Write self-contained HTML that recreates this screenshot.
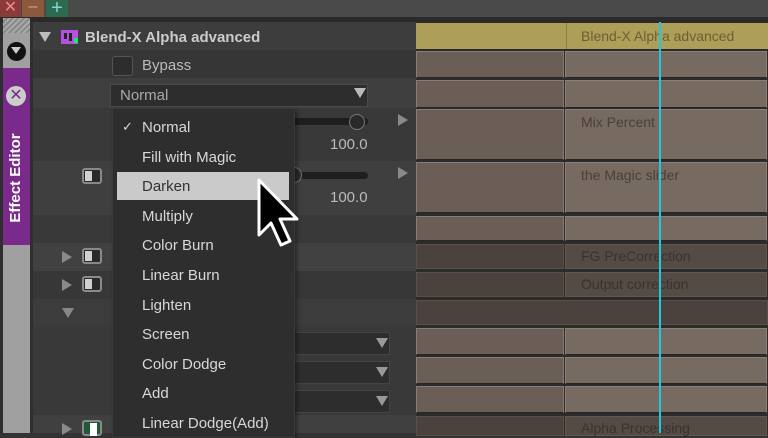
<!DOCTYPE html><html><head><style>
*{margin:0;padding:0;box-sizing:border-box}
body{width:768px;height:433px;overflow:hidden;background:#333;font-family:"Liberation Sans","DejaVu Sans",sans-serif;position:relative}
.a{position:absolute}
.t{color:#d0d0d0;font-size:15px;white-space:nowrap}
.tr{position:absolute;border:1px solid #8a7d75;border-bottom-color:#2a2522;background:#6b5e56}
.tr2{position:absolute;border:1px solid #8d8078;border-bottom-color:#2a2522;background:#776a61}
.dk{background:#4b423d!important;border-color:#5a504a!important}
.dk2{background:#554b45!important;border-color:#625751!important}
.lbl{position:absolute;color:#4a403a;font-size:15px;white-space:nowrap}
.mi{position:absolute;left:142px;color:#d8d8d8;font-size:15px}
.tog{position:absolute;width:20px;height:16px;border:2px solid #8a8a8a;border-radius:3px;background:#2a2a2a}
.tog::before{content:"";position:absolute;left:1px;top:1px;width:7px;height:10px;background:#d0d0d0}
.tri{position:absolute;width:0;height:0;border-top:6px solid transparent;border-bottom:6px solid transparent;border-left:10px solid #8a8a8a}
.dn{position:absolute;width:0;height:0;border-left:6px solid transparent;border-right:6px solid transparent;border-top:10px solid #999}
</style></head><body>
<!-- top bar -->
<div class="a" style="left:0;top:0;width:768px;height:17px;background:#4a4a4a"></div>
<div class="a" style="left:0;top:17px;width:768px;height:5px;background:#2a2a2a"></div>
<div class="a" style="left:0;top:0;width:21px;height:17px;background:#8a3a3a;color:#e88;font-size:16px;text-align:center;line-height:16px">✕</div>
<div class="a" style="left:22px;top:0;width:22px;height:17px;background:#8a5a3a;color:#e9a;font-size:16px;text-align:center;line-height:14px">–</div>
<div class="a" style="left:46px;top:0;width:22px;height:17px;background:#2e6a50;color:#7dc;font-size:20px;text-align:center;line-height:16px">+</div>
<!-- left strip -->
<div class="a" style="left:0;top:22px;width:33px;height:411px;background:#2f2f2f"></div>
<div class="a" style="left:3px;top:18px;width:27px;height:15px;background:repeating-linear-gradient(135deg,#aaa 0 2px,#888 2px 4px)"></div>
<div class="a" style="left:3px;top:33px;width:27px;height:35px;background:#a0a0a0"></div>
<div class="a" style="left:7px;top:42px;width:19px;height:19px;border-radius:50%;background:#111"></div>
<div class="a" style="left:11px;top:47px;width:0;height:0;border-left:5px solid transparent;border-right:5px solid transparent;border-top:7px solid #ccc"></div>
<div class="a" style="left:3px;top:68px;width:27px;height:177px;background:#7a2a8a"></div>
<div class="a" style="left:6px;top:86px;width:20px;height:20px;border-radius:50%;background:#ccc;color:#7a2a8a;font-size:16px;font-weight:bold;text-align:center;line-height:20px">✕</div>
<div class="a" style="left:-35px;top:168px;width:102px;height:20px;transform:rotate(-90deg);color:#fff;font-weight:bold;font-size:15px;text-align:center;line-height:20px">Effect Editor</div>
<div class="a" style="left:3px;top:245px;width:27px;height:188px;background:#a0a0a0"></div>
<!-- main panel -->
<div class="a" style="left:33px;top:22px;width:383px;height:411px;background:#3b3b3b"></div>
<div class="a" style="left:33px;top:22px;width:383px;height:28px;background:#3d3d3d"></div>
<div class="a" style="left:33px;top:50px;width:383px;height:28px;background:#363636"></div>
<div class="a" style="left:33px;top:78px;width:383px;height:30px;background:#3f3f3f"></div>
<div class="a" style="left:33px;top:108px;width:383px;height:53px;background:#393939"></div>
<div class="a" style="left:33px;top:161px;width:383px;height:54px;background:#3f3f3f"></div>
<div class="a" style="left:33px;top:215px;width:383px;height:28px;background:#393939"></div>
<div class="a" style="left:33px;top:243px;width:383px;height:28px;background:#414141"></div>
<div class="a" style="left:33px;top:271px;width:383px;height:28px;background:#373737"></div>
<div class="a" style="left:33px;top:299px;width:383px;height:28px;background:#3c3c3c"></div>
<div class="a" style="left:33px;top:327px;width:383px;height:88px;background:#393939"></div>
<div class="a" style="left:33px;top:415px;width:383px;height:18px;background:#404040"></div>
<div class="a" style="left:39px;top:32px;width:0;height:0;border-left:6px solid transparent;border-right:6px solid transparent;border-top:10px solid #bbb"></div>
<div class="a" style="left:61px;top:30px;width:17px;height:14px;background:#b550e0"></div>
<div class="a" style="left:64px;top:33px;width:3px;height:6px;background:#222"></div>
<div class="a" style="left:69px;top:33px;width:3px;height:8px;background:#222"></div>
<div class="a" style="left:74px;top:38px;width:4px;height:5px;background:#1e6"></div>
<div class="a t" style="left:85px;top:29px;font-weight:bold;color:#ccc">Blend-X Alpha advanced</div>
<div class="a" style="left:112px;top:56px;width:21px;height:20px;border:1px solid #555;border-radius:3px;background:#2d2d2d"></div>
<div class="a t" style="left:142px;top:57px;color:#bbb">Bypass</div>
<div class="a" style="left:110px;top:84px;width:258px;height:23px;background:#2d2d2d;border:1px solid #4a4a4a"></div>
<div class="a t" style="left:120px;top:87px;color:#aaa">Normal</div>
<div class="dn" style="left:354px;top:88px;border-top-color:#bbb"></div>
<!-- sliders -->
<div class="a" style="left:290px;top:118px;width:78px;height:7px;border-radius:4px;background:#1e1e1e"></div>
<div class="a" style="left:349px;top:114px;width:16px;height:16px;border-radius:50%;background:#2a2a2a;border:1px solid #777"></div>
<div class="a t" style="left:330px;top:136px;color:#bbb">100.0</div>
<div class="tri" style="left:398px;top:114px"></div>
<div class="tog" style="left:82px;top:168px"></div>
<div class="a" style="left:290px;top:172px;width:78px;height:7px;border-radius:4px;background:#1e1e1e"></div>
<div class="a" style="left:286px;top:167px;width:16px;height:16px;border-radius:50%;background:#2a2a2a;border:1px solid #777"></div>
<div class="a t" style="left:330px;top:189px;color:#bbb">100.0</div>
<div class="tri" style="left:398px;top:167px"></div>
<div class="tri" style="left:62px;top:251px"></div><div class="tog" style="left:82px;top:248px"></div>
<div class="tri" style="left:62px;top:279px"></div><div class="tog" style="left:82px;top:276px"></div>
<div class="dn" style="left:62px;top:308px;border-top-color:#888"></div>
<div class="a" style="left:290px;top:332px;width:100px;height:23px;background:#2d2d2d;border:1px solid #444"></div>
<div class="a" style="left:290px;top:361px;width:100px;height:23px;background:#2d2d2d;border:1px solid #444"></div>
<div class="a" style="left:290px;top:390px;width:100px;height:23px;background:#2d2d2d;border:1px solid #444"></div>
<div class="dn" style="left:376px;top:338px"></div><div class="dn" style="left:376px;top:367px"></div><div class="dn" style="left:376px;top:396px"></div>
<div class="tri" style="left:62px;top:423px"></div>
<div class="a" style="left:82px;top:420px;width:20px;height:16px;border:2px solid #8a8a8a;border-radius:3px;background:#1e5a36"></div>
<div class="a" style="left:90px;top:423px;width:7px;height:13px;background:#fff"></div>
<!-- timeline -->
<div class="a" style="left:416px;top:22px;width:352px;height:411px;background:#2b2b2b"></div>
<div class="a" style="left:416px;top:23px;width:150px;height:26px;background:#ad9f58"></div>
<div class="a" style="left:566px;top:23px;width:202px;height:26px;background:#ad9f58;border-left:1px solid #8a7e45"></div>
<div class="lbl" style="left:581px;top:28px;color:#6a6035;font-size:14px">Blend-X Alpha advanced</div>
<div class="tr" style="left:416px;top:51px;width:148px;height:27px"></div><div class="tr2" style="left:565px;top:51px;width:202px;height:27px"></div>
<div class="tr" style="left:416px;top:80px;width:148px;height:28px"></div><div class="tr2" style="left:565px;top:80px;width:202px;height:28px"></div>
<div class="tr" style="left:416px;top:109px;width:148px;height:51px"></div><div class="tr2" style="left:565px;top:109px;width:202px;height:51px"></div>
<div class="lbl" style="left:581px;top:114px;font-size:14px">Mix Percent</div>
<div class="tr" style="left:416px;top:162px;width:148px;height:51px"></div><div class="tr2" style="left:565px;top:162px;width:202px;height:51px"></div>
<div class="lbl" style="left:581px;top:167px;font-size:14px">the Magic slider</div>
<div class="tr" style="left:416px;top:216px;width:148px;height:25px"></div><div class="tr2" style="left:565px;top:216px;width:202px;height:25px"></div>
<div class="tr dk" style="left:416px;top:244px;width:148px;height:25px"></div><div class="tr2 dk2" style="left:565px;top:244px;width:202px;height:25px"></div>
<div class="lbl" style="left:581px;top:248px;font-size:14px;color:#3a322e">FG PreCorrection</div>
<div class="tr dk" style="left:416px;top:272px;width:148px;height:25px"></div><div class="tr2 dk2" style="left:565px;top:272px;width:202px;height:25px"></div>
<div class="lbl" style="left:581px;top:276px;font-size:14px;color:#3a322e">Output correction</div>
<div class="tr dk" style="left:416px;top:300px;width:352px;height:25px"></div>
<div class="tr" style="left:416px;top:328px;width:148px;height:27px"></div><div class="tr2" style="left:565px;top:328px;width:202px;height:27px"></div>
<div class="tr" style="left:416px;top:357px;width:148px;height:27px"></div><div class="tr2" style="left:565px;top:357px;width:202px;height:27px"></div>
<div class="tr" style="left:416px;top:386px;width:148px;height:27px"></div><div class="tr2" style="left:565px;top:386px;width:202px;height:27px"></div>
<div class="tr dk" style="left:416px;top:416px;width:148px;height:20px"></div><div class="tr2 dk2" style="left:565px;top:416px;width:202px;height:20px"></div>
<div class="lbl" style="left:581px;top:420px;font-size:14px;color:#3a322e">Alpha Processing</div>
<div class="a" style="left:659px;top:22px;width:2px;height:411px;background:#1fc8e0"></div>
<!-- menu -->
<div class="a" style="left:112px;top:108px;width:183px;height:330px;background:#2e2e2e;border:1px solid #3a3a3a;box-shadow:2px 2px 4px rgba(0,0,0,.4)"></div>
<div class="a" style="left:117px;top:172px;width:172px;height:28px;background:#cacaca"></div>
<div class="mi" style="left:122px;top:119px;font-size:13px">✓</div>
<div class="mi" style="top:119px">Normal</div>
<div class="mi" style="top:149px">Fill with Magic</div>
<div class="mi" style="top:178px;color:#333">Darken</div>
<div class="mi" style="top:208px">Multiply</div>
<div class="mi" style="top:237px">Color Burn</div>
<div class="mi" style="top:267px">Linear Burn</div>
<div class="mi" style="top:297px">Lighten</div>
<div class="mi" style="top:326px">Screen</div>
<div class="mi" style="top:356px">Color Dodge</div>
<div class="mi" style="top:385px">Add</div>
<div class="mi" style="top:415px">Linear Dodge(Add)</div>
<svg class="a" style="left:250px;top:175px" width="60" height="80"><path d="M9 5 L9 60 L21 48 L31 70 L40 66 L30 44 L47 44 Z" fill="#000" stroke="#fff" stroke-width="3" stroke-linejoin="round"/></svg>
</body></html>
